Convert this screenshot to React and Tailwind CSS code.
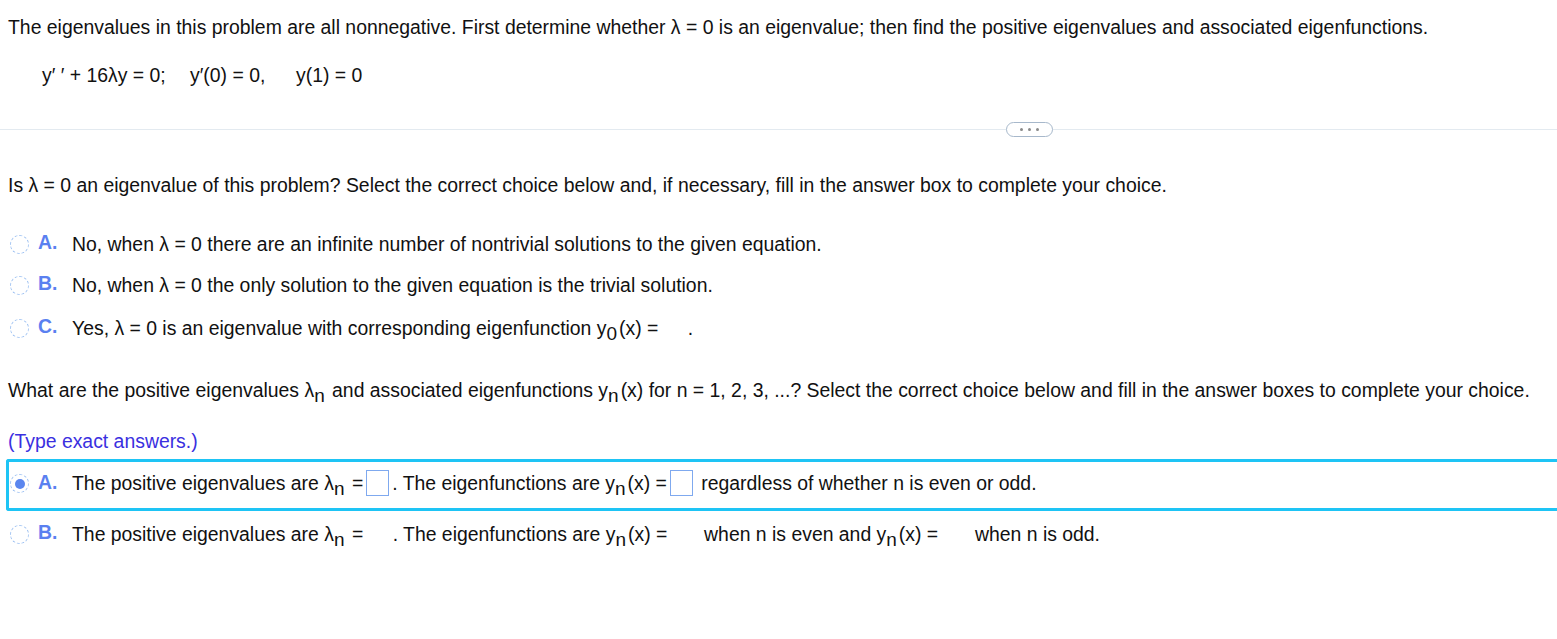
import React from 'react';

function Radio({ checked }) {
  return (
    <span className="relative inline-flex w-[19px] h-[19px] rounded-full border border-dashed border-[#9fc2f2] items-center justify-center flex-shrink-0">
      {checked && <span className="w-[10px] h-[10px] rounded-full bg-[#5a86ef]" />}
    </span>
  );
}

function Box() {
  return <span className="inline-block w-[23px] h-[26px] border border-[#7fa9ef] align-middle mx-[3px] -mt-[3px]" />;
}

function Blank({ w }) {
  return <span className={`inline-block ${w} h-[20px] align-middle`} />;
}

function Sub({ children }) {
  return <span className="text-[19px] leading-none relative top-[5px] mr-[2px]">{children}</span>;
}

function Choice({ letter, checked, children, className = '' }) {
  return (
    <div className={`flex items-center h-[24px] ${className}`}>
      <span className="w-[38px] flex justify-end pr-[9px]">
        <Radio checked={checked} />
      </span>
      <span className="w-[34px] text-[#5a80f0] font-bold -mt-[4px]">{letter}</span>
      <span className="whitespace-nowrap">{children}</span>
    </div>
  );
}

export default function App() {
  return (
    <div className="w-[1557px] h-[639px] bg-white text-[#111] text-[19.4px] leading-[24px] overflow-hidden" style={{ fontFamily: '"Liberation Sans", Arial, sans-serif' }}>
      <div className="pt-[15px] pl-[8px] whitespace-nowrap">
        The eigenvalues in this problem are all nonnegative. First determine whether λ = 0 is an eigenvalue; then find the positive eigenvalues and associated eigenfunctions.
      </div>
      <div className="flex pl-[42px] mt-[24px]">
        <span className="w-[148px]">y′ ′ + 16λy = 0;</span>
        <span className="w-[106px]">y′(0) = 0,</span>
        <span>y(1) = 0</span>
      </div>

      <div className="relative mt-[42px] h-[1px] bg-[#e3eaf0]">
        <span className="absolute left-[1006px] -top-[7px] w-[47px] h-[15px] rounded-full border border-[#a7b8cb] bg-white flex items-center justify-center gap-[5px]">
          <span className="w-[3px] h-[3px] bg-[#8a8a8a] rounded-full" />
          <span className="w-[3px] h-[3px] bg-[#8a8a8a] rounded-full" />
          <span className="w-[3px] h-[3px] bg-[#8a8a8a] rounded-full" />
        </span>
      </div>

      <div className="pl-[8px] mt-[43px] whitespace-nowrap">
        Is λ = 0 an eigenvalue of this problem? Select the correct choice below and, if necessary, fill in the answer box to complete your choice.
      </div>

      <Choice letter="A." className="mt-[35px]">No, when λ = 0 there are an infinite number of nontrivial solutions to the given equation.</Choice>
      <Choice letter="B." className="mt-[17px]">No, when λ = 0 the only solution to the given equation is the trivial solution.</Choice>
      <Choice letter="C." className="mt-[19px]">
        Yes, λ = 0 is an eigenvalue with corresponding eigenfunction y<Sub>0</Sub>(x) = <Blank w="w-[24px]" />.
      </Choice>

      <div className="pl-[8px] mt-[38px] whitespace-nowrap">
        What are the positive eigenvalues λ<Sub>n</Sub> and associated eigenfunctions y<Sub>n</Sub>(x) for n = 1, 2, 3, ...? Select the correct choice below and fill in the answer boxes to complete your choice.
      </div>
      <div className="pl-[8px] mt-[27px] text-[#3a2fe0]">(Type exact answers.)</div>

      <div className="ml-[6px] mt-[6px] h-[52px] border-[3px] border-r-0 border-[#1ec4f5] rounded-l-[3px] flex items-center">
        <Choice letter="A." checked className="-ml-[9px] -mt-[3px]">
          The positive eigenvalues are λ<Sub>n</Sub> =<Box />. The eigenfunctions are y<Sub>n</Sub>(x) =<Box /> regardless of whether n is even or odd.
        </Choice>
      </div>
      <Choice letter="B." className="mt-[11px]">
        The positive eigenvalues are λ<Sub>n</Sub> = <Blank w="w-[24px]" />. The eigenfunctions are y<Sub>n</Sub>(x) = <Blank w="w-[26px]" /> when n is even and y<Sub>n</Sub>(x) = <Blank w="w-[26px]" /> when n is odd.
      </Choice>
    </div>
  );
}
